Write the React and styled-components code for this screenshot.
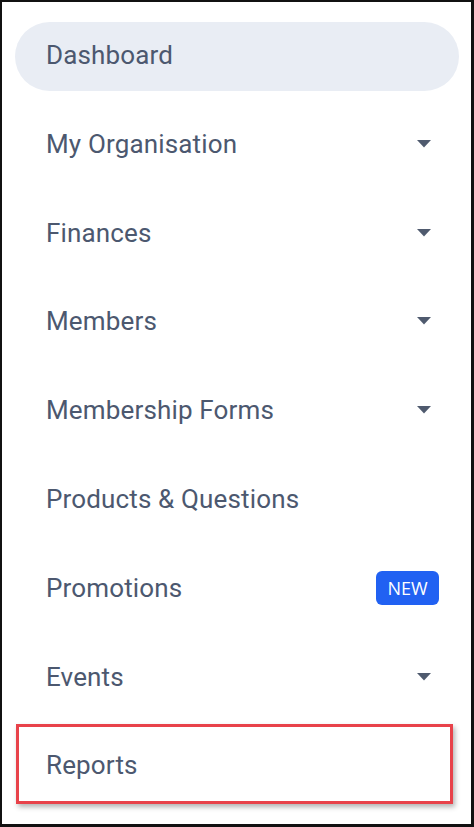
import React from 'react'
import styled, { createGlobalStyle } from 'styled-components'

const GlobalStyle = createGlobalStyle`
  html, body {
    margin: 0;
    padding: 0;
    background: #ffffff;
  }
  body {
    font-family: Roboto, "Liberation Sans", sans-serif;
  }
`

const items = [
  { label: 'Dashboard', active: true },
  { label: 'My Organisation', caret: true },
  { label: 'Finances', caret: true },
  { label: 'Members', caret: true },
  { label: 'Membership Forms', caret: true },
  { label: 'Products & Questions' },
  { label: 'Promotions', badge: 'NEW' },
  { label: 'Events', caret: true },
  { label: 'Reports', highlighted: true },
]

const Caret = () => (
  <svg width="14" height="8" viewBox="0 0 14 8">
    <path d="M0 0 L14 0 L7 7.5 Z" fill="#4f5a6e" />
  </svg>
)

const App = () => {
  return (
    <>
      <GlobalStyle />
      <Frame>
        <Nav>
          {items.map((item) => (
            <NavItem key={item.label} $active={item.active} $highlighted={item.highlighted}>
              <Label>{item.label}</Label>
              {item.caret && <Caret />}
              {item.badge && <Badge>{item.badge}</Badge>}
            </NavItem>
          ))}
        </Nav>
      </Frame>
    </>
  )
}

export default App

const Frame = styled.div`
  width: 474px;
  height: 827px;
  box-sizing: border-box;
  border-style: solid;
  border-color: #111;
  border-width: 2px 3px 3px 2px;
  padding: 20px 12px 0 13px;
  background: #fff;
  overflow: hidden;
`

const Nav = styled.nav`
  display: flex;
  flex-direction: column;
  gap: 19.8px;
`

const NavItem = styled.div`
  position: relative;
  height: 69px;
  display: flex;
  align-items: center;
  justify-content: space-between;
  padding: 0 28px 3px 31px;
  box-sizing: border-box;
  border-radius: 35px;
  background: ${(p) => (p.$active ? '#e9edf4' : 'transparent')};

  ${(p) =>
    p.$highlighted &&
    `
    &::after {
      content: '';
      position: absolute;
      left: 1px;
      right: 6px;
      top: -8px;
      bottom: -3px;
      border: 3px solid #e8424a;
      box-shadow: 2px 3px 5px rgba(0, 0, 0, 0.3);
      pointer-events: none;
    }
  `}
`

const Label = styled.span`
  font-size: 26px;
  font-weight: 400;
  color: #4c586f;
  letter-spacing: 0.15px;
`

const Badge = styled.span`
  display: inline-flex;
  align-items: center;
  justify-content: center;
  width: 63px;
  height: 34px;
  margin-right: -8px;
  border-radius: 6px;
  background: #2161f2;
  color: #fff;
  font-family: "Open Sans", sans-serif;
  font-size: 18px;
  font-weight: 400;
`
